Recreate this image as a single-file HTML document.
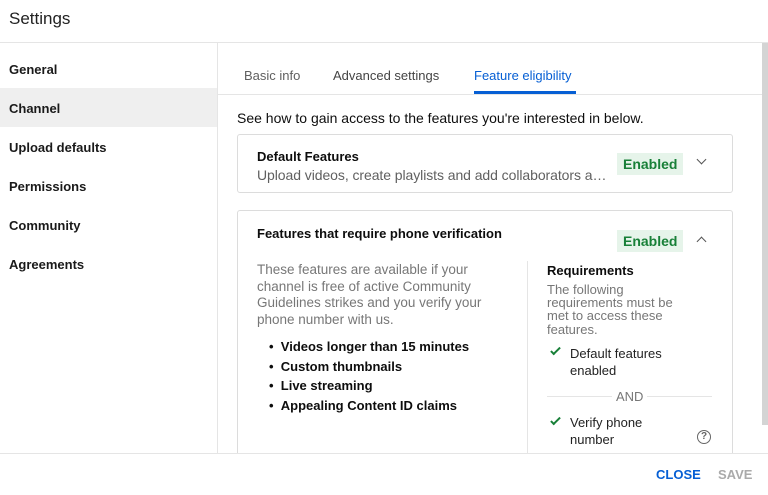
<!DOCTYPE html>
<html><head><meta charset="utf-8"><style>
*{box-sizing:border-box;margin:0;padding:0}
body{width:768px;height:495px;overflow:hidden;background:#fff;font-family:"Liberation Sans",sans-serif;color:#0d0d0d;position:relative}
.a{position:absolute;white-space:nowrap}
.side{font-size:13px;font-weight:bold;left:9px;color:#1a1a1a}
.g{color:#606060}
.en{position:absolute;background:#e6f4ea;color:#188038;font-weight:bold;font-size:14px;padding:4px 6px;line-height:14px}
.chev{position:absolute;width:7px;height:7px;border-right:1.5px solid #555;border-bottom:1.5px solid #555}
.chk{position:absolute;width:5px;height:10px;border-right:2px solid #188038;border-bottom:2px solid #188038;transform:rotate(45deg)}
</style></head><body>
<div class="a" style="left:9px;top:9px;font-size:17px;color:#222">Settings</div>
<div class="a" style="left:0;top:42px;width:768px;height:1px;background:#e5e5e5"></div>
<div class="a" style="left:217px;top:43px;width:1px;height:410px;background:#e5e5e5"></div>
<div class="a" style="left:0;top:88px;width:217px;height:39px;background:#efefef"></div>
<div class="a side" style="top:62px">General</div>
<div class="a side" style="top:101px">Channel</div>
<div class="a side" style="top:140px">Upload defaults</div>
<div class="a side" style="top:179px">Permissions</div>
<div class="a side" style="top:218px">Community</div>
<div class="a side" style="top:257px">Agreements</div>

<div class="a g" style="left:244px;top:68px;font-size:13px">Basic info</div>
<div class="a g" style="left:333px;top:68px;font-size:13px;color:#444">Advanced settings</div>
<div class="a" style="left:474px;top:68px;font-size:13px;color:#065fd4">Feature eligibility</div>
<div class="a" style="left:474px;top:91px;width:102px;height:3px;background:#065fd4"></div>
<div class="a" style="left:218px;top:94px;width:544px;height:1px;background:#e5e5e5"></div>
<div class="a" style="left:762px;top:43px;width:6px;height:382px;background:#d4d4d4"></div>

<div class="a" style="left:237px;top:110px;font-size:14px">See how to gain access to the features you're interested in below.</div>

<div class="a" style="left:237px;top:134px;width:496px;height:59px;border:1px solid #dcdcdc;border-radius:3px"></div>
<div class="a" style="left:257px;top:149px;font-size:13px;font-weight:bold">Default Features</div>
<div class="a g" style="left:257px;top:167px;font-size:14px;letter-spacing:-0.07px">Upload videos, create playlists and add collaborators a…</div>
<div class="en" style="left:617px;top:153px">Enabled</div>
<div class="chev" style="left:698px;top:156px;transform:rotate(45deg)"></div>

<div class="a" style="left:237px;top:210px;width:496px;height:260px;border:1px solid #dcdcdc;border-radius:3px"></div>
<div class="a" style="left:257px;top:226px;font-size:13px;font-weight:bold">Features that require phone verification</div>
<div class="en" style="left:617px;top:230px">Enabled</div>
<div class="chev" style="left:698px;top:238px;transform:rotate(-135deg)"></div>

<div class="a g" style="left:257px;top:262px;font-size:13.5px;line-height:16.5px;color:#777">These features are available if your<br>channel is free of active Community<br>Guidelines strikes and you verify your<br>phone number with us.</div>
<div class="a" style="left:269px;top:337px;font-size:13px;font-weight:bold;line-height:19.7px">• &nbsp;Videos longer than 15 minutes<br>• &nbsp;Custom thumbnails<br>• &nbsp;Live streaming<br>• &nbsp;Appealing Content ID claims</div>
<div class="a" style="left:527px;top:261px;width:1px;height:195px;background:#e5e5e5"></div>

<div class="a" style="left:547px;top:263px;font-size:13px;font-weight:bold">Requirements</div>
<div class="a" style="left:547px;top:283px;font-size:13px;line-height:13.2px;color:#777">The following<br>requirements must be<br>met to access these<br>features.</div>
<div class="chk" style="left:553px;top:345px"></div>
<div class="a" style="left:570px;top:346px;font-size:13px;line-height:16.5px;color:#222">Default features<br>enabled</div>
<div class="a" style="left:547px;top:396px;width:65px;height:1px;background:#e5e5e5"></div>
<div class="a" style="left:647px;top:396px;width:65px;height:1px;background:#e5e5e5"></div>
<div class="a" style="left:616px;top:389px;font-size:13px;color:#777">AND</div>
<div class="chk" style="left:553px;top:415px"></div>
<div class="a" style="left:570px;top:415px;font-size:13px;line-height:16.5px;color:#222">Verify phone<br>number</div>
<div class="a" style="left:697px;top:430px;width:14px;height:14px;border:1.5px solid #666;border-radius:50%;font-size:10px;line-height:11px;text-align:center;color:#666;font-weight:bold">?</div>

<div class="a" style="left:0;top:453px;width:768px;height:42px;background:#fff;border-top:1px solid #e5e5e5"></div>
<div class="a" style="left:656px;top:467px;font-size:13px;font-weight:bold;color:#065fd4">CLOSE</div>
<div class="a" style="left:718px;top:467px;font-size:13px;font-weight:bold;color:#aaa">SAVE</div>
</body></html>
